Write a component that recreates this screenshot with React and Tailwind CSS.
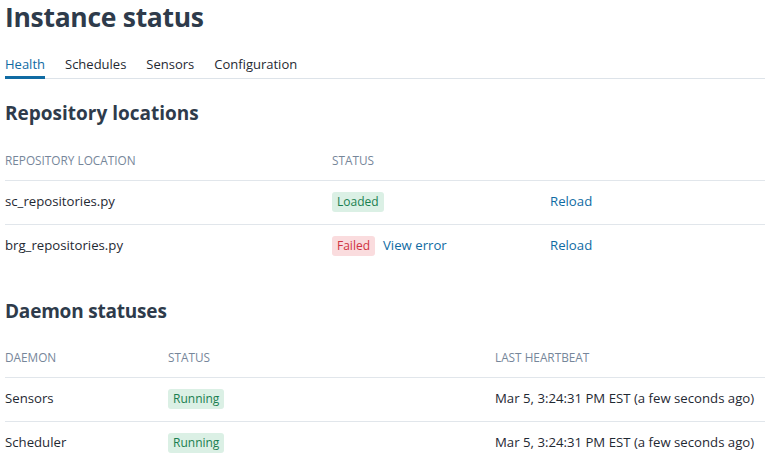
import React from "react";

const font = { fontFamily: '"Open Sans", "Noto Sans", sans-serif' };

function Badge({ kind, children }) {
  const cls =
    kind === "green"
      ? "bg-[#dbf0e5] text-[#1a7f50]"
      : "bg-[#fadcde] text-[#cf3340]";
  return (
    <span className={`inline-flex items-center h-[20px] px-[5px] rounded-[3px] text-[12px] ${cls}`}>
      {children}
    </span>
  );
}

function HeaderRow({ cols }) {
  return (
    <div className="flex h-[40px] items-center border-b border-[#e1e6eb] text-[11.8px] text-[#76869a] uppercase">
      {cols.map((c, i) => (
        <div key={i} className={c.w}>{c.label}</div>
      ))}
    </div>
  );
}

export default function App() {
  return (
    <div className="w-[765px] h-[460px] bg-white overflow-hidden pl-[5px] text-[#1f2933]" style={font}>
      <h1 className="text-[26.5px] font-bold text-[#2e3b4b] leading-[32px] pt-[1px] mb-[-1px] tracking-[-0.3px]">Instance status</h1>
      <div className="mt-[17px] flex gap-[20px] border-b border-[#dde3e9] text-[13px] leading-[20px] h-[30px] pt-[5px]">
        <div className="relative text-[#106ba3]">
          Health
          <div className="absolute left-0 right-0 bottom-[-1px] h-[3px] bg-[#106ba3]" />
        </div>
        <div>Schedules</div>
        <div>Sensors</div>
        <div>Configuration</div>
      </div>

      <h2 className="mt-[21px] text-[19px] font-bold text-[#2e3b4b] leading-[26px]">Repository locations</h2>
      <div className="mt-[15px]">
        <HeaderRow
          cols={[
            { label: "Repository location", w: "w-[327px]" },
            { label: "Status", w: "w-[218px]" },
            { label: "", w: "flex-1" },
          ]}
        />
        <div className="flex h-[44px] items-center pb-[2px] border-b border-[#e1e6eb] text-[13.2px]">
          <div className="w-[327px]">sc_repositories.py</div>
          <div className="w-[218px]"><Badge kind="green">Loaded</Badge></div>
          <div className="flex-1 text-[#106ba3]">Reload</div>
        </div>
        <div className="flex h-[44px] items-center pb-[2px] text-[13.2px]">
          <div className="w-[327px]">brg_repositories.py</div>
          <div className="w-[218px] flex items-center gap-[8px]">
            <Badge kind="red">Failed</Badge>
            <span className="text-[#106ba3]">View error</span>
          </div>
          <div className="flex-1 text-[#106ba3]">Reload</div>
        </div>
      </div>

      <h2 className="mt-[29px] text-[19px] font-bold text-[#2e3b4b] leading-[26px] tracking-[-0.2px]">Daemon statuses</h2>
      <div className="mt-[14px]">
        <HeaderRow
          cols={[
            { label: "Daemon", w: "w-[163px]" },
            { label: "Status", w: "w-[327px]" },
            { label: "Last heartbeat", w: "flex-1" },
          ]}
        />
        {["Sensors", "Scheduler"].map((d, i) => (
          <div key={d} className={`flex h-[44px] items-center pb-[2px] text-[13.2px] ${i === 0 ? "border-b border-[#e1e6eb]" : ""}`}>
            <div className="w-[163px]">{d}</div>
            <div className="w-[327px]"><Badge kind="green">Running</Badge></div>
            <div className="flex-1 whitespace-nowrap">Mar 5, 3:24:31 PM EST (a few seconds ago)</div>
          </div>
        ))}
      </div>
    </div>
  );
}
